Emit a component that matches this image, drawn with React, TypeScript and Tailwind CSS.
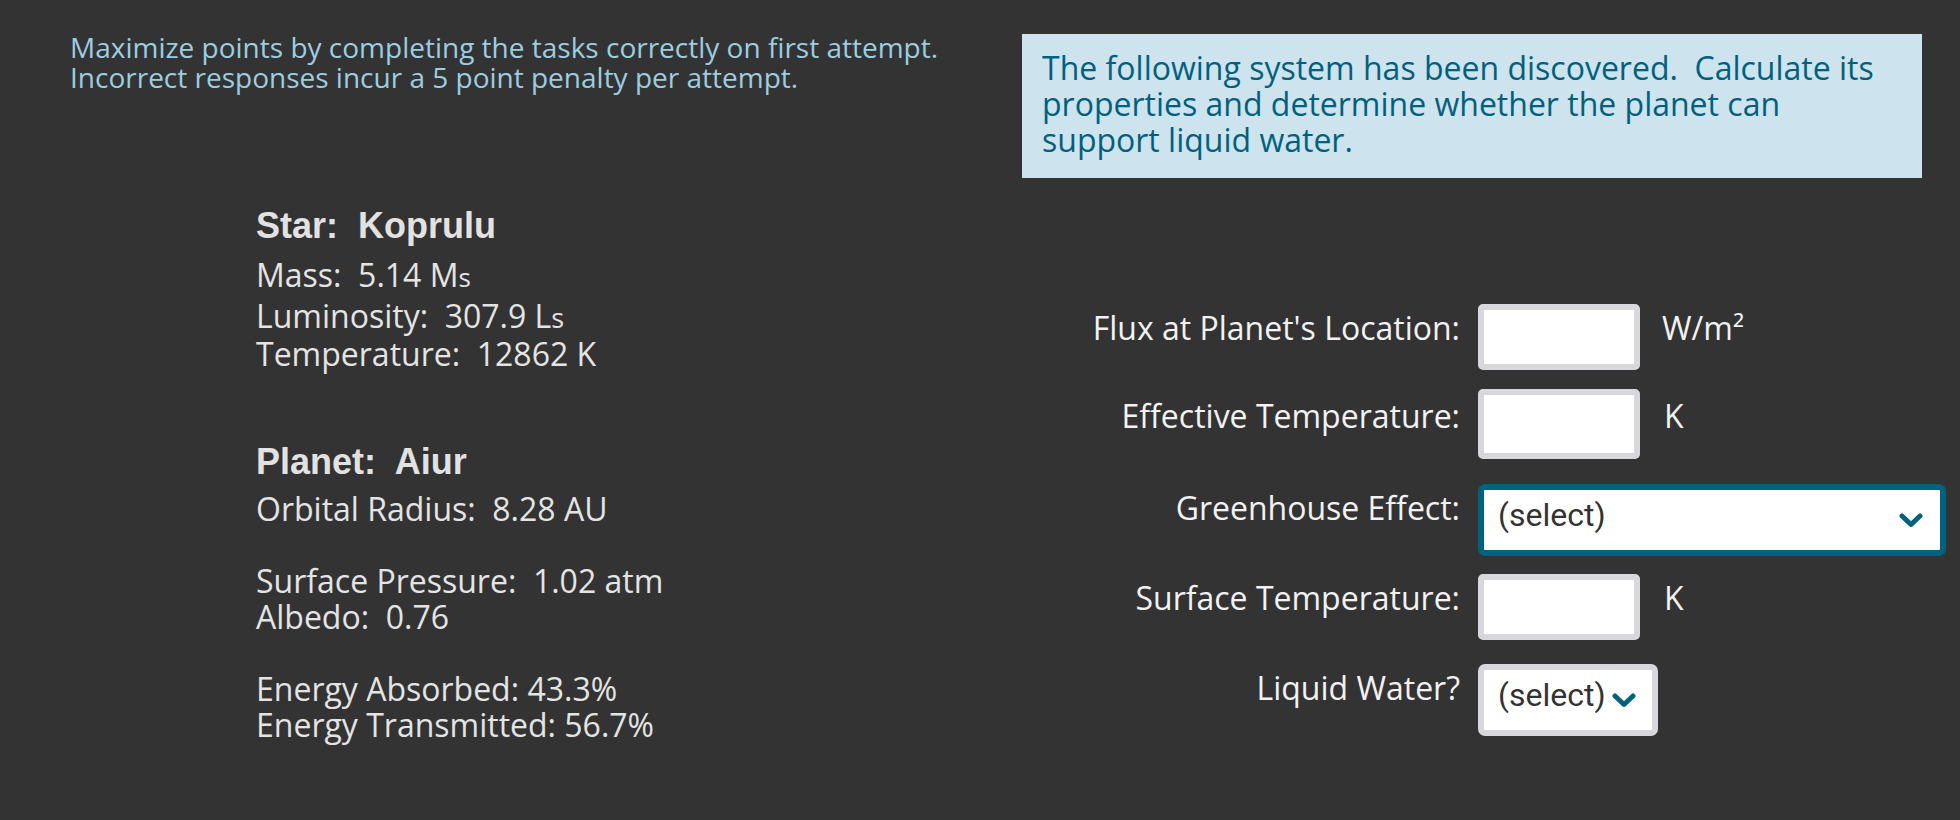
import React from "react";

function Chevron({ className }: { className?: string }) {
  return (
    <svg className={className} viewBox="0 0 24 15" width="24" height="15" fill="none">
      <polyline points="3,3 12,11.5 21,3" stroke="#00627e" strokeWidth="5" strokeLinecap="round" strokeLinejoin="round" />
    </svg>
  );
}

function TextInput({ h = "h-[66px]" }: { h?: string }) {
  return <div className={`w-[162px] ${h} rounded-[5px] border-[6px] border-[#d8d8dc] bg-white`} />;
}

function Row({ label, children, mt, lmt = "mt-[6px]" }: { label: string; children: React.ReactNode; mt: string; lmt?: string }) {
  return (
    <div className={`flex items-start ${mt}`}>
      <div className={`w-[441px] pr-[3px] text-right text-[32px] leading-[36px] ${lmt} text-[#f2f2f2] whitespace-nowrap`}>{label}</div>
      <div className="ml-[15px] flex items-start">{children}</div>
    </div>
  );
}

export default function App() {
  return (
    <div className="w-[1960px] h-[820px] bg-[#333333] flex font-['Open_Sans',sans-serif] overflow-hidden">
      {/* Left column */}
      <div className="w-[1022px] shrink-0 pl-[70px] pt-[32px]">
        <div className="text-[28px] leading-[30px] text-[#9ccde0] whitespace-nowrap">
          <div>Maximize points by completing the tasks correctly on first attempt.</div>
          <div>Incorrect responses incur a 5 point penalty per attempt.</div>
        </div>

        <div className="ml-[186px] mt-[114px] text-[#e4e4e4]">
          <div className="font-['Liberation_Sans',Arial,sans-serif] font-bold text-[36px] leading-[40px] whitespace-pre text-[#e2e2e2]">
            {"Star:  Koprulu"}
          </div>
          <div className="mt-[11px] text-[32px] leading-[36px] whitespace-pre">
            {"Mass:  5.14 M"}
            <span className="text-[26px]">s</span>
          </div>
          <div className="mt-[3px] text-[32px] leading-[36px] whitespace-pre">
            <div>
              {"Luminosity:  307.9 L"}
              <span className="text-[27px]">s</span>
            </div>
            <div>{"Temperature:  12862 K"}</div>
          </div>

          <div className="mt-[70px] font-['Liberation_Sans',Arial,sans-serif] font-bold text-[36px] leading-[40px] whitespace-pre text-[#e2e2e2]">
            {"Planet:  Aiur"}
          </div>
          <div className="mt-[9px] text-[32px] leading-[36px] whitespace-pre">
            <div>{"Orbital Radius:  8.28 AU"}</div>
            <div className="h-[36px]" />
            <div>{"Surface Pressure:  1.02 atm"}</div>
            <div>{"Albedo:  0.76"}</div>
            <div className="h-[36px]" />
            <div>{"Energy Absorbed: 43.3%"}</div>
            <div>{"Energy Transmitted: 56.7%"}</div>
          </div>
        </div>
      </div>

      {/* Right column */}
      <div className="flex-1 pt-[34px]">
        <div className="w-[900px] h-[144px] bg-[#cde4ee] pl-[20px] pt-[16px] text-[32px] leading-[36px] text-[#02607f] whitespace-pre">
          <div>{"The following system has been discovered.  Calculate its"}</div>
          <div>properties and determine whether the planet can</div>
          <div>support liquid water.</div>
        </div>

        <Row label="Flux at Planet's Location:" mt="mt-[126px]">
          <TextInput />
          <div className="ml-[22px] mt-[6px] text-[32px] leading-[36px] text-[#f2f2f2]">W/m²</div>
        </Row>

        <Row label="Effective Temperature:" mt="mt-[19px]" lmt="mt-[9px]">
          <TextInput h="h-[70px]" />
          <div className="ml-[24px] mt-[9px] text-[32px] leading-[36px] text-[#f2f2f2]">K</div>
        </Row>

        <Row label="Greenhouse Effect:" mt="mt-[25px]">
          <div className="w-[468px] h-[72px] rounded-[7px] border-[6px] border-[#00627e] bg-white flex items-center justify-between pl-[14px] pr-[17px]">
            <span className="relative top-[-5px] font-['Roboto',sans-serif] text-[32px] leading-[36px] text-[#333333]">(select)</span>
            <Chevron />
          </div>
        </Row>

        <Row label="Surface Temperature:" mt="mt-[18px]">
          <TextInput />
          <div className="ml-[24px] mt-[6px] text-[32px] leading-[36px] text-[#f2f2f2]">K</div>
        </Row>

        <Row label="Liquid Water?" mt="mt-[24px]">
          <div className="w-[180px] h-[72px] rounded-[7px] border-[6px] border-[#d8d8dc] bg-white flex items-center pl-[14px]">
            <span className="relative top-[-5px] font-['Roboto',sans-serif] text-[32px] leading-[36px] text-[#333333]">(select)</span>
            <Chevron className="ml-[6px]" />
          </div>
        </Row>
      </div>
    </div>
  );
}
